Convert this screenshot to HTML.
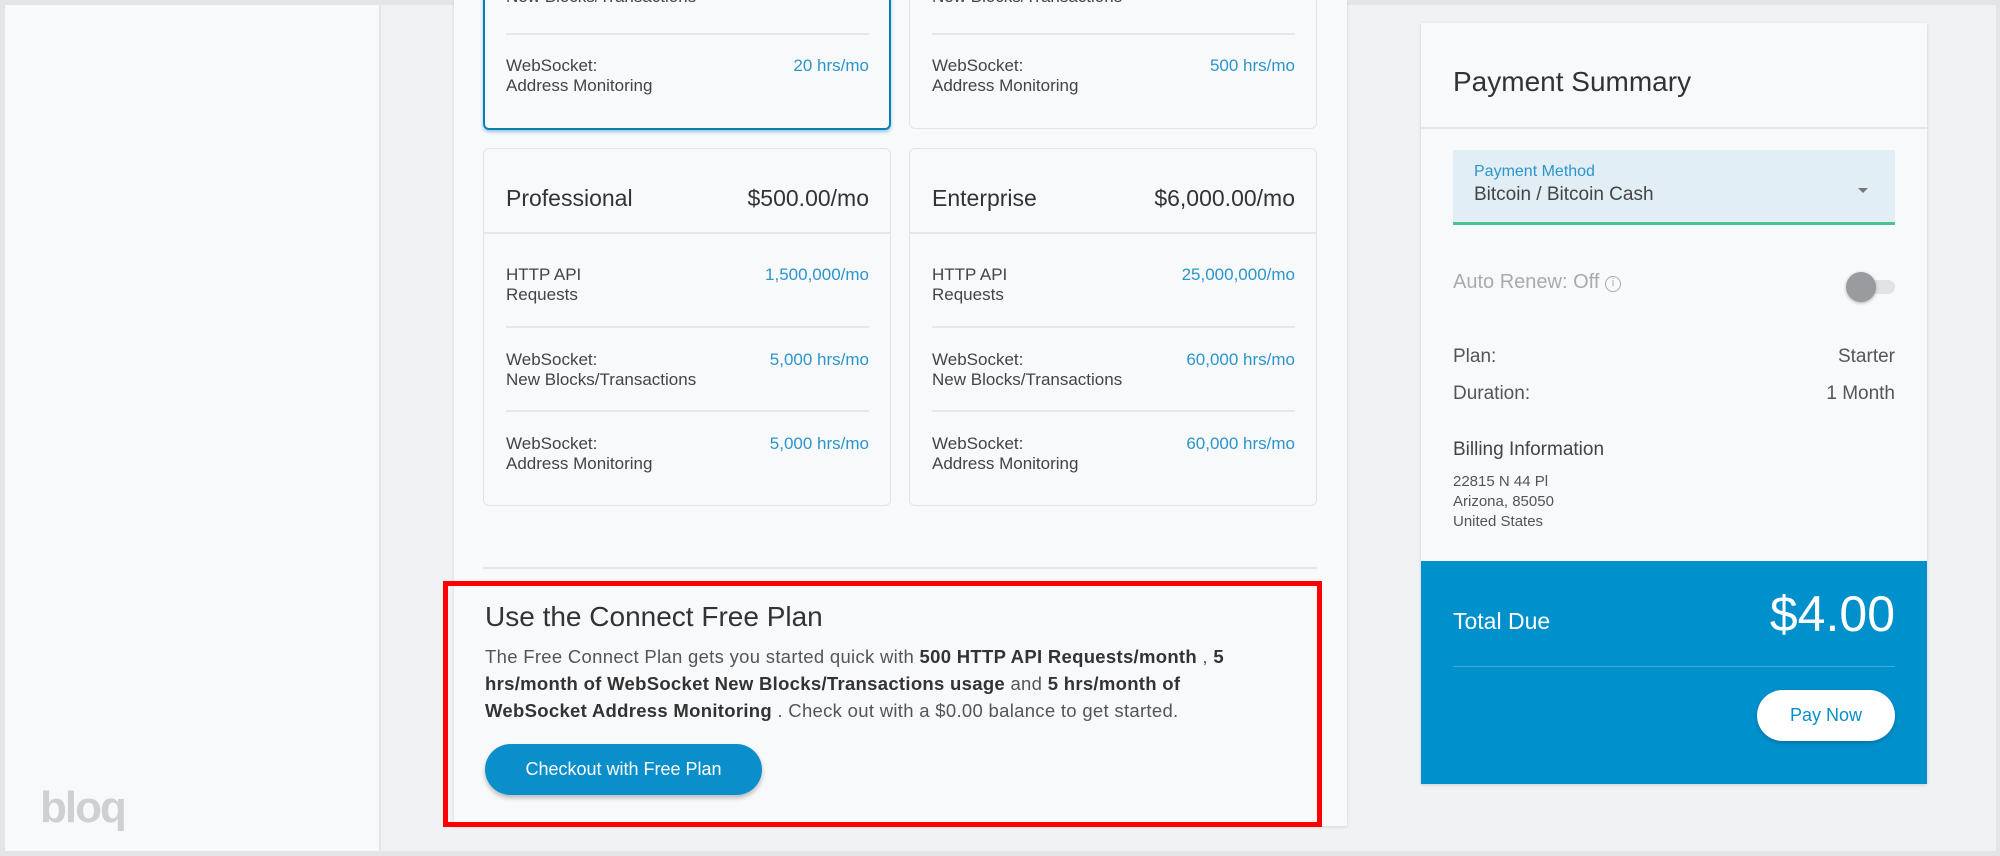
<!DOCTYPE html>
<html><head><meta charset="utf-8"><style>
*{box-sizing:border-box;margin:0;padding:0}
body{width:2000px;height:856px;overflow:hidden;background:#e4e5e7;font-family:"Liberation Sans",sans-serif;color:#3a3a3a;position:relative}
.abs{position:absolute}
.side{left:5px;top:5px;width:376px;height:846px;background:#f8f9fb;border-right:2px solid #e3e4e6}
.bg{left:381px;top:5px;width:1615px;height:846px;background:#f1f2f4}
.main{left:454px;top:0;width:893px;height:826px;background:#f8f9fb;box-shadow:0 1px 3px rgba(0,0,0,.12)}
.card{position:absolute;background:#f8f9fb;border:1px solid #e2e4e7;border-radius:6px}
.sel{border:2px solid #0a7fb5;box-shadow:0 2px 3px rgba(10,127,181,.4)}
.t{position:absolute;font-size:17px;line-height:20px;color:#444}
.v{position:absolute;font-size:17px;color:#2c95cc;text-align:right}
.hr{position:absolute;height:2px;background:#e6e7e9}
.h{position:absolute;font-size:23px;color:#333}
</style></head><body>
<div class="abs side"></div>
<div class="abs bg"></div>
<div class="abs main"></div>
<div class="abs" style="left:40px;top:783px;font-size:44px;font-weight:bold;color:#cfd0d2;letter-spacing:-2px">bloq</div>

<!-- top cards -->
<div class="card sel" style="left:483px;top:-10px;width:408px;height:140px"></div>
<div class="card" style="left:909px;top:-10px;width:408px;height:139px"></div>
<div class="t" style="left:506px;top:-13px">New Blocks/Transactions</div>
<div class="t" style="left:932px;top:-13px">New Blocks/Transactions</div>
<div class="hr" style="left:506px;top:33px;width:363px"></div>
<div class="hr" style="left:932px;top:33px;width:363px"></div>
<div class="t" style="left:506px;top:56px">WebSocket:<br>Address Monitoring</div>
<div class="v" style="left:700px;top:56px;width:169px">20 hrs/mo</div>
<div class="t" style="left:932px;top:56px">WebSocket:<br>Address Monitoring</div>
<div class="v" style="left:1100px;top:56px;width:195px">500 hrs/mo</div>

<!-- second row -->
<div class="card" style="left:483px;top:148px;width:408px;height:358px"></div>
<div class="card" style="left:909px;top:148px;width:408px;height:358px"></div>
<div class="hr" style="left:484px;top:232px;width:406px"></div>
<div class="hr" style="left:910px;top:232px;width:406px"></div>
<div class="h" style="left:506px;top:185px">Professional</div>
<div class="h" style="left:700px;top:185px;width:169px;text-align:right">$500.00/mo</div>
<div class="h" style="left:932px;top:185px">Enterprise</div>
<div class="h" style="left:1100px;top:185px;width:195px;text-align:right">$6,000.00/mo</div>

<div class="t" style="left:506px;top:265px">HTTP API<br>Requests</div>
<div class="v" style="left:700px;top:265px;width:169px">1,500,000/mo</div>
<div class="hr" style="left:506px;top:326px;width:363px"></div>
<div class="t" style="left:506px;top:350px">WebSocket:<br>New Blocks/Transactions</div>
<div class="v" style="left:700px;top:350px;width:169px">5,000 hrs/mo</div>
<div class="hr" style="left:506px;top:410px;width:363px"></div>
<div class="t" style="left:506px;top:434px">WebSocket:<br>Address Monitoring</div>
<div class="v" style="left:700px;top:434px;width:169px">5,000 hrs/mo</div>

<div class="t" style="left:932px;top:265px">HTTP API<br>Requests</div>
<div class="v" style="left:1100px;top:265px;width:195px">25,000,000/mo</div>
<div class="hr" style="left:932px;top:326px;width:363px"></div>
<div class="t" style="left:932px;top:350px">WebSocket:<br>New Blocks/Transactions</div>
<div class="v" style="left:1100px;top:350px;width:195px">60,000 hrs/mo</div>
<div class="hr" style="left:932px;top:410px;width:363px"></div>
<div class="t" style="left:932px;top:434px">WebSocket:<br>Address Monitoring</div>
<div class="v" style="left:1100px;top:434px;width:195px">60,000 hrs/mo</div>

<div class="hr" style="left:483px;top:567px;width:834px"></div>

<!-- free plan -->
<div class="abs" style="left:443px;top:581px;width:879px;height:246px;border:5px solid #f00"></div>
<div class="abs" style="left:485px;top:601px;font-size:28px;color:#333">Use the Connect Free Plan</div>
<div class="abs" style="left:485px;top:643px;width:820px;font-size:18.5px;line-height:27px;color:#555;letter-spacing:0.3px;white-space:nowrap">The Free Connect Plan gets you started quick with <b style="color:#333">500 HTTP API Requests/month</b> , <b style="color:#333">5</b><br><b style="color:#333">hrs/month of WebSocket New Blocks/Transactions usage</b> and <b style="color:#333">5 hrs/month of</b><br><b style="color:#333">WebSocket Address Monitoring</b> . Check out with a $0.00 balance to get started.</div>
<div class="abs" style="left:485px;top:744px;width:277px;height:51px;border-radius:26px;background:#0a8fcb;color:#fff;font-size:18px;line-height:51px;text-align:center;box-shadow:0 3px 5px rgba(0,0,0,.25)">Checkout with Free Plan</div>

<!-- payment summary -->
<div class="abs" style="left:1421px;top:23px;width:506px;height:761px;background:#f8f9fb;box-shadow:0 1px 3px rgba(0,0,0,.15)"></div>
<div class="abs" style="left:1453px;top:66px;font-size:28px;color:#333">Payment Summary</div>
<div class="hr" style="left:1421px;top:127px;width:506px"></div>
<div class="abs" style="left:1453px;top:150px;width:442px;height:75px;background:#e1eef5;border-bottom:3px solid #4cc38a"></div>
<div class="abs" style="left:1474px;top:163px;font-size:16px;color:#2c95cc">Payment Method</div>
<div class="abs" style="left:1474px;top:184px;font-size:19px;color:#444">Bitcoin / Bitcoin Cash</div>
<div class="abs" style="left:1858px;top:188px;width:0;height:0;border-left:5px solid transparent;border-right:5px solid transparent;border-top:5px solid #777"></div>
<div class="abs" style="left:1453px;top:271px;font-size:20px;color:#aaa">Auto Renew: Off <span style="display:inline-block;width:16px;height:16px;border:1.5px solid #aaa;border-radius:50%;font-size:11px;line-height:13px;text-align:center;vertical-align:2px">i</span></div>
<div class="abs" style="left:1850px;top:280px;width:45px;height:14px;border-radius:7px;background:#e2e3e5"></div>
<div class="abs" style="left:1846px;top:272px;width:30px;height:30px;border-radius:50%;background:#9a9b9e;box-shadow:0 1px 3px rgba(0,0,0,.3)"></div>
<div class="abs" style="left:1453px;top:346px;font-size:19px;color:#555">Plan:</div>
<div class="abs" style="left:1700px;top:346px;width:195px;text-align:right;font-size:19px;color:#555">Starter</div>
<div class="abs" style="left:1453px;top:383px;font-size:19px;color:#555">Duration:</div>
<div class="abs" style="left:1700px;top:383px;width:195px;text-align:right;font-size:19px;color:#555">1 Month</div>
<div class="abs" style="left:1453px;top:439px;font-size:19px;color:#444">Billing Information</div>
<div class="abs" style="left:1453px;top:472px;font-size:15px;line-height:20px;color:#555">22815 N 44 Pl<br>Arizona, 85050<br>United States</div>
<div class="abs" style="left:1421px;top:561px;width:506px;height:223px;background:#0090cc"></div>
<div class="abs" style="left:1453px;top:608px;font-size:23px;color:#fff">Total Due</div>
<div class="abs" style="left:1700px;top:585px;width:195px;text-align:right;font-size:50px;color:#fff">$4.00</div>
<div class="abs" style="left:1453px;top:666px;width:442px;height:1px;background:rgba(255,255,255,.25)"></div>
<div class="abs" style="left:1757px;top:690px;width:138px;height:51px;border-radius:26px;background:#fff;color:#0a8fcb;font-size:18px;line-height:51px;text-align:center;box-shadow:0 2px 4px rgba(0,0,0,.2)">Pay Now</div>
</body></html>
